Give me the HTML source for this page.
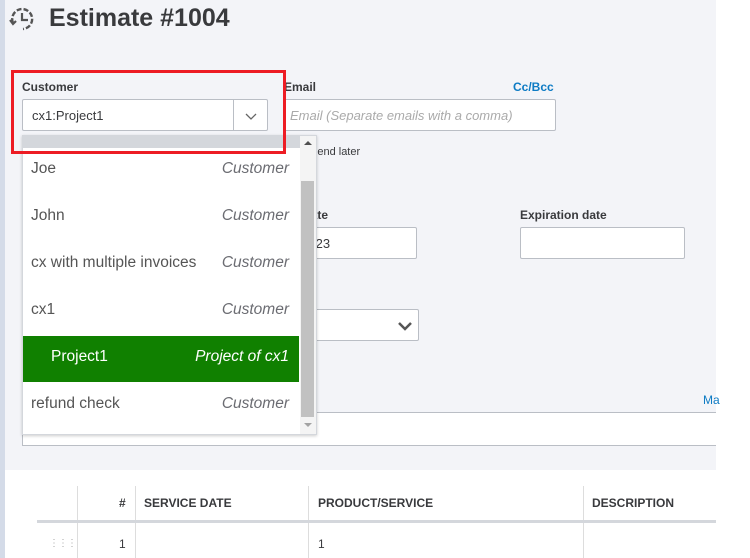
<!DOCTYPE html>
<html><head><style>
*{margin:0;padding:0;box-sizing:border-box}
body{width:750px;height:558px;overflow:hidden;background:#fff;font-family:"Liberation Sans",sans-serif;position:relative;color:#393a3d}
.a{position:absolute}
.inp{position:absolute;background:#fff;border:1px solid #babec5;border-radius:2px}
.lbl{position:absolute;font-size:12px;font-weight:bold;color:#393a3d}
.item{position:absolute;left:23px;width:276px;height:47px;font-size:15.5px;color:#555}
.item .n{position:absolute;left:8px;top:15px}
.item .t{position:absolute;right:10px;top:15px;font-style:italic;color:#6b6c72}
</style></head><body>
<div class="a" style="left:0;top:0;width:5px;height:558px;background:#d4dbe8"></div>
<div class="a" style="left:5px;top:0;width:711px;height:470px;background:#f3f4f8"></div>
<svg class="a" style="left:8px;top:5px" width="30" height="28" viewBox="0 0 30 28"><path d="M5 18A10 10 0 1 1 15 24" fill="none" stroke="#555" stroke-width="2.4" stroke-dasharray="5 2"/><path d="M14 8v7h6" fill="none" stroke="#555" stroke-width="2.2"/><path d="M2 15l3 4 3-3" fill="none" stroke="#555" stroke-width="2.2"/></svg>
<div class="a" style="left:49px;top:4px;font-size:25px;font-weight:bold;color:#393a3d">Estimate #1004</div>
<div class="lbl" style="left:22px;top:80px">Customer</div>
<div class="inp" style="left:22px;top:99px;width:246px;height:32px"><span class="a" style="left:9px;top:8px;font-size:13px;color:#393a3d">cx1:Project1</span><div class="a" style="left:210px;top:0;width:1px;height:30px;background:#babec5"></div><svg class="a" style="left:222px;top:11px" width="12" height="10"><path d="M1 3l5 5 5-5" fill="none" stroke="#666" stroke-width="1.3"/></svg></div>
<div class="lbl" style="left:284px;top:80px">Email</div>
<div class="a" style="left:513px;top:80px;font-size:12px;font-weight:bold;color:#0d7bc4">Cc/Bcc</div>
<div class="inp" style="left:284px;top:99px;width:272px;height:32px"><span class="a" style="left:5px;top:8px;font-size:13px;font-style:italic;color:#aaa">Email (Separate emails with a comma)</span></div>
<div class="a" style="left:310px;top:146px;font-size:11px">Send later</div>
<div class="lbl" style="left:250px;top:208px">Estimate date</div>
<div class="inp" style="left:250px;top:227px;width:167px;height:32px"><span class="a" style="left:14px;top:8px;font-size:13px">01/01/2023</span></div>
<div class="lbl" style="left:520px;top:208px">Expiration date</div>
<div class="inp" style="left:520px;top:227px;width:165px;height:32px"></div>
<div class="inp" style="left:284px;top:309px;width:135px;height:32px"><svg class="a" style="left:112px;top:10px" width="16" height="12"><path d="M2 3l6 6 6-6" fill="none" stroke="#555" stroke-width="2.5"/></svg></div>
<div class="a" style="left:703px;top:393px;font-size:12px;color:#0d7bc4">Ma</div>
<div class="a" style="left:22px;top:412px;width:694px;height:34px;background:#fff;border:1px solid #babec5;border-right:none"></div>
<div class="a" style="left:22px;top:135px;width:295px;height:300px;background:#fff;border:1px solid #d4d7dc;box-shadow:0 1px 3px rgba(0,0,0,.2)"></div>
<div class="a" style="left:23px;top:136px;width:277px;height:12px;background:#d4d7dc"></div>
<div class="a" style="left:300px;top:136px;width:16px;height:298px;background:#f4f4f4"></div>
<div class="a" style="left:301px;top:181px;width:13px;height:236px;background:#c1c1c1"></div>
<svg class="a" style="left:303px;top:140px" width="10" height="6"><path d="M1 5l4-4 4 4z" fill="#505050"/></svg>
<svg class="a" style="left:303px;top:422px" width="10" height="6"><path d="M1 1l4 4 4-4z" fill="#a3a3a3"/></svg>
<div class="item" style="top:145px"><span class="n">Joe</span><span class="t">Customer</span></div>
<div class="item" style="top:192px"><span class="n">John</span><span class="t">Customer</span></div>
<div class="item" style="top:239px"><span class="n">cx with multiple invoices</span><span class="t">Customer</span></div>
<div class="item" style="top:286px"><span class="n">cx1</span><span class="t">Customer</span></div>
<div class="item" style="top:336px;background:#108000;height:46px"><span class="n" style="left:28px;top:12px;color:#fff">Project1</span><span class="t" style="color:#fff;top:12px">Project of cx1</span></div>
<div class="item" style="top:380px"><span class="n">refund check</span><span class="t">Customer</span></div>
<div class="a" style="left:11px;top:70px;width:275px;height:84px;border:3px solid #ed1c24"></div>
<div class="a" style="left:77px;top:486px;width:1px;height:72px;background:#ddd"></div>
<div class="a" style="left:135px;top:486px;width:1px;height:72px;background:#ddd"></div>
<div class="a" style="left:308px;top:486px;width:1px;height:72px;background:#ddd"></div>
<div class="a" style="left:583px;top:486px;width:1px;height:72px;background:#ddd"></div>
<div class="a" style="left:37px;top:520px;width:679px;height:3px;background:#d4d7dc"></div>
<div class="a" style="left:119px;top:496px;font-size:12px;font-weight:bold">#</div>
<div class="a" style="left:144px;top:496px;font-size:12px;font-weight:bold">SERVICE DATE</div>
<div class="a" style="left:318px;top:496px;font-size:12px;font-weight:bold">PRODUCT/SERVICE</div>
<div class="a" style="left:592px;top:496px;font-size:12px;font-weight:bold">DESCRIPTION</div>
<div class="a" style="left:49px;top:538px;font-size:10px;color:#aaa;letter-spacing:-1px">⋮⋮⋮</div>
<div class="a" style="left:119px;top:537px;font-size:12px">1</div>
<div class="a" style="left:318px;top:537px;font-size:12px">1</div>
</body></html>
